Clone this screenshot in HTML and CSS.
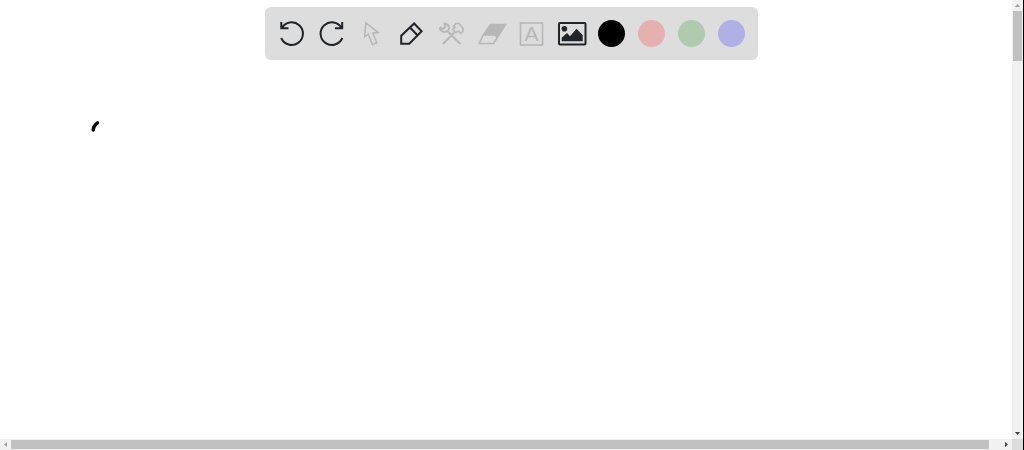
FILE: index.html
```html
<!DOCTYPE html>
<html lang="en">
<head>
	<meta charset="utf-8">
	<title>Whiteboard</title>
	<link rel="stylesheet" href="styles.css">
</head>
<body>
<div class="board">
	<header class="toolbar">
		<button type="button" class="tool" aria-label="Undo">
			<svg viewBox="0 0 40 41"><path d="M10.3 9V15.3H17.5M10.8 15A11.3 11.3 0 1 1 10.2 25"/></svg>
		</button>
		<button type="button" class="tool" aria-label="Redo">
			<svg viewBox="0 0 40 41"><path d="M31.2 9V15.3H24M30.7 15A11.3 11.3 0 1 0 31.3 25"/></svg>
		</button>
		<button type="button" class="tool off" aria-label="Select">
			<svg viewBox="0 0 40 41"><path class="thin" d="M14.8 9.8L13.7 23.7L17.4 21.2L21.5 31.7L25.8 29.8L21.8 20.2L27 19.4Z"/></svg>
		</button>
		<button type="button" class="tool" aria-label="Pen">
			<svg viewBox="0 0 40 41"><path d="M23.2 10.5L30.6 18.3L18.3 30.7H10.2V22.8ZM19 14.5L26.7 22.5"/></svg>
		</button>
		<button type="button" class="tool off" aria-label="Tools">
			<svg viewBox="0 0 40 41"><path d="M8.8 14.2A4.6 4.6 0 0 0 15 18.6L16.3 18L29.5 31M8.8 14.2L11.6 15.8L14 14.2L13.6 10.5A4.6 4.6 0 0 1 18 15.3L17.2 17.2M23.2 19.5L12 31"/><path class="thin" d="M22.3 13.5L24.7 10.5H28L32 15.2V18L29.7 20.3L27.3 18L24.8 19.8L21.8 16.5L24.2 14.5Z"/></svg>
		</button>
		<button type="button" class="tool off" aria-label="Eraser">
			<svg viewBox="0 0 40 41"><path class="thin" d="M19.5 11.5H34.5L22.5 30.5H8.2L12 22.5Z"/><path class="solid" d="M19.3 11.5H34.5L26 25.2L23.5 22.8H11.5Z"/></svg>
		</button>
		<button type="button" class="tool off" aria-label="Text">
			<svg viewBox="0 0 40 41"><rect class="thin" x="9.5" y="10" width="22" height="22"/><text x="20.5" y="28" text-anchor="middle">A</text></svg>
		</button>
		<button type="button" class="tool" aria-label="Image">
			<svg viewBox="0 0 40 41"><rect x="8" y="10" width="26.5" height="21.5" rx="1"/><circle class="solid" cx="13.4" cy="15.7" r="2.8"/><path class="solid" d="M10.7 28.3V24.7L16 20L19 23.2L25.5 15.7L31.7 22V28.3Z"/></svg>
		</button>
		<button type="button" class="tool" aria-label="Black"><span class="swatch black"></span></button>
		<button type="button" class="tool" aria-label="Red"><span class="swatch red"></span></button>
		<button type="button" class="tool" aria-label="Green"><span class="swatch green"></span></button>
		<button type="button" class="tool" aria-label="Blue"><span class="swatch blue"></span></button>
	</header>
	<main class="canvas">
		<svg class="drawing"><path d="M93.3 130Q93.3 126 97.5 122.8"/></svg>
	</main>
	<div class="scroll vertical">
		<svg class="arrow faint" viewBox="0 0 11 11"><path d="M3 7L5.5 4L8 7Z"/></svg>
		<div class="track"><div class="thumb"></div></div>
		<svg class="arrow" viewBox="0 0 11 11"><path d="M3 4L5.5 7L8 4Z"/></svg>
	</div>
	<div class="scroll horizontal">
		<svg class="arrow faint" viewBox="0 0 11 11"><path d="M7 3L4 5.5L7 8Z"/></svg>
		<div class="track"><div class="thumb"></div></div>
		<svg class="arrow" viewBox="0 0 11 11"><path d="M4 3L7 5.5L4 8Z"/></svg>
	</div>
	<div class="corner"></div>
</div>
</body>
</html>
```

FILE: styles.css
```css
*{
	box-sizing: border-box;
}
body{
	margin: 0;
	background: #fff;
	font-family: "Liberation Sans", Arial, sans-serif;
}
.board{
	display: grid;
	grid-template-columns: minmax(0, 1fr) 11px;
	grid-template-rows: minmax(0, 1fr) 11px;
	height: 100vh;
	border-right: 1px solid #000;
}
/* the toolbar floats over the canvas, centred on the whole board */
.toolbar{
	grid-area: 1 / 1 / 2 / 3;
	justify-self: center;
	align-self: start;
	z-index: 1;
	display: flex;
	margin-top: 7px;
	padding: 6px 7px 6px 6px;
	border-radius: 6px;
	background: #ddd;
}
.tool{
	display: flex;
	align-items: center;
	justify-content: center;
	width: 40px;
	height: 41px;
	padding: 0;
	border: 0;
	background: none;
	color: #212529;
}
.tool.off{
	color: #b7b7b7;
}
.tool svg{
	width: 40px;
	height: 41px;
	fill: none;
	stroke: currentColor;
	stroke-width: 2;
}
.tool .thin{
	stroke-width: 1.6;
}
.tool .solid{
	fill: currentColor;
	stroke: none;
}
.tool text{
	font-size: 21px;
	fill: currentColor;
	stroke: none;
}
.swatch{
	width: 27px;
	height: 27px;
	margin-left: 1px;
	border-radius: 50%;
}
.black{
	background: #000;
}
.red{
	background: #e5b0b0;
}
.green{
	background: #b0cab0;
}
.blue{
	background: #b0b0e5;
}
.canvas{
	grid-area: 1 / 1 / 2 / 2;
}
.drawing{
	display: block;
	width: 100%;
	height: 100%;
	fill: none;
	stroke: #000;
	stroke-width: 3.5;
	stroke-linecap: round;
}
.scroll{
	display: flex;
	background: #f1f1f1;
}
.vertical{
	grid-area: 1 / 2 / 2 / 3;
	flex-direction: column;
}
.horizontal{
	grid-area: 2 / 1 / 3 / 2;
}
.track{
	flex: 1;
}
.thumb{
	background: #c1c1c1;
}
.vertical .thumb{
	height: 12%;
	margin: 0 1px;
}
.horizontal .thumb{
	width: 98.8%;
	height: 9px;
	margin: 1px 0;
}
.arrow{
	width: 11px;
	height: 11px;
	flex: none;
	fill: #444;
}
.faint{
	fill: #a0a0a0;
}
.corner{
	grid-area: 2 / 2 / 3 / 3;
	background: #dcdcdc;
}
```
